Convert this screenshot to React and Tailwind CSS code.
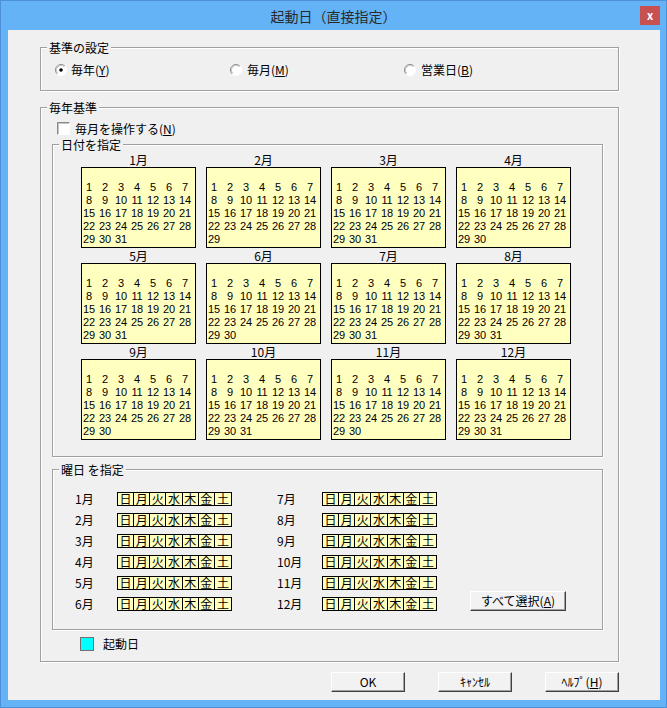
import React from "react";

const DAYS = [31, 29, 31, 30, 31, 30, 31, 31, 30, 31, 30, 31];
const WEEK = ["日", "月", "火", "水", "木", "金", "土"];

function Group({ label, className = "", children }) {
  return (
    <fieldset
      className={
        "border border-[#a0a0a0] shadow-[inset_1px_1px_0_#fff,1px_1px_0_#fff] " +
        className
      }
    >
      <legend className="ml-[6px] px-[2px] text-[12px] leading-[15px] bg-[#f0f0f0]">
        {label}
      </legend>
      {children}
    </fieldset>
  );
}

function Radio({ checked }) {
  return (
    <svg width="12" height="12" viewBox="0 0 12 12" className="shrink-0">
      <circle cx="6" cy="6" r="5.5" fill="#fff" />
      <path d="M2.11 9.89 A5.5 5.5 0 0 1 9.89 2.11" stroke="#8a8a8a" fill="none" />
      <path d="M2.82 9.18 A4.5 4.5 0 0 1 9.18 2.82" stroke="#c4c4c4" fill="none" />
      <path d="M9.89 2.11 A5.5 5.5 0 0 1 2.11 9.89" stroke="#ffffff" fill="none" />
      {checked && <circle cx="6" cy="6" r="1.8" fill="#000" />}
    </svg>
  );
}

function U({ children }) {
  return <span className="underline underline-offset-[1px]">{children}</span>;
}

function Btn({ children, className = "" }) {
  return (
    <div
      className={
        "flex items-center justify-center h-[20px] bg-[#f2f2f2] border border-t-white border-l-white border-r-[#404040] border-b-[#404040] shadow-[inset_-1px_-1px_0_#a0a0a0] text-[12px] leading-[12px] " +
        className
      }
    >
      {children}
    </div>
  );
}

function Calendar({ month, days }) {
  const nums = Array.from({ length: days }, (_, i) => i + 1);
  return (
    <div className="flex flex-col items-center">
      <div className="h-[15px] text-[12px] leading-[15px]">{month}月</div>
      <div className="w-[115px] h-[81px] border border-black bg-[#ffffc0] pl-[1px] pt-[13px]">
        <div className="grid grid-cols-[repeat(7,12px)] gap-x-[4px] font-['Liberation_Sans',sans-serif] text-[11px] leading-[13px] tracking-[-0.2px]">
          {nums.map((n) => (
            <div key={n} className="text-center whitespace-nowrap flex justify-center">
              {n}
            </div>
          ))}
        </div>
      </div>
    </div>
  );
}

function WeekBox() {
  return (
    <div className="w-[115px] h-[14px] border border-black bg-[#ffffc0] grid grid-cols-7 divide-x divide-black">
      {WEEK.map((w) => (
        <div key={w} className="flex items-center justify-center text-[12px] leading-[12px]">
          {w}
        </div>
      ))}
    </div>
  );
}

function WeekCol({ start, labelW }) {
  return (
    <div className="flex flex-col gap-y-[7px]">
      {Array.from({ length: 6 }, (_, i) => start + i).map((m) => (
        <div key={m} className="flex items-center h-[14px]">
          <div className={labelW + " text-[12px] leading-[14px]"}>{m}月</div>
          <WeekBox />
        </div>
      ))}
    </div>
  );
}

export default function App() {
  return (
    <div className="w-[667px] h-[708px] bg-[#64b3f7] shadow-[inset_0_0_0_1px_#4b90d8] flex flex-col font-['Noto_Sans_CJK_JP','Noto_Sans',sans-serif] text-black">
      {/* title bar */}
      <div className="h-[30px] grid grid-cols-[1fr_auto_1fr]">
        <div />
        <div className="self-center pt-[2px] text-[14px] leading-[16px] text-[#2a2a2a]">
          起動日（直接指定）
        </div>
        <div className="justify-self-end mr-[7px] mt-[6px] w-[20px] h-[19px] bg-[#c75050] flex items-center justify-center text-white text-[11px] leading-[11px] font-bold">
          x
        </div>
      </div>

      {/* client */}
      <div className="ml-[8px] w-[652px] h-[670px] bg-[#f0f0f0] flex flex-col">
        <Group label="基準の設定" className="mt-[10px] ml-[32px] w-[579px] h-[51px]">
          <div className="mt-[8px] pl-[14px] flex items-center h-[13px] text-[12px] leading-[13px]">
            <div className="w-[175px] flex items-center gap-[4px]">
              <Radio checked />
              <span>
                毎年(<U>Y</U>)
              </span>
            </div>
            <div className="w-[174px] flex items-center gap-[5px]">
              <Radio />
              <span>
                毎月(<U>M</U>)
              </span>
            </div>
            <div className="flex items-center gap-[5px]">
              <Radio />
              <span>
                営業日(<U>B</U>)
              </span>
            </div>
          </div>
        </Group>

        <Group label="毎年基準" className="mt-[9px] ml-[32px] w-[579px] pb-[10px]">
          <div className="mt-[7px] ml-[16px] flex items-center h-[13px] gap-[5px] text-[12px] leading-[13px]">
            <div className="w-[13px] h-[13px] bg-white border border-t-[#8a8a8a] border-l-[#8a8a8a] border-b-white border-r-white shadow-[inset_1px_1px_0_#c4c4c4]" />
            <span>
              毎月を操作する(<U>N</U>)
            </span>
          </div>

          <Group label="日付を指定" className="mt-[2px] ml-[11px] w-[551px] pb-[16px]">
            <div className="pl-[28px] grid grid-cols-[repeat(4,115px)] gap-x-[10px]">
              {DAYS.map((d, i) => (
                <Calendar key={i} month={i + 1} days={d} />
              ))}
            </div>
          </Group>

          <Group label="曜日 を指定" className="mt-[5px] ml-[11px] w-[551px] pt-[15px] pb-[18px]">
            <div className="pl-[22px] flex items-end">
              <WeekCol start={1} labelW="w-[42px]" />
              <div className="ml-[45px]">
                <WeekCol start={7} labelW="w-[45px]" />
              </div>
              <Btn className="ml-[33px] w-[96px]">
                すべて選択(<U>A</U>)
              </Btn>
            </div>
          </Group>

          <div className="mt-[7px] ml-[39px] flex items-center h-[14px] gap-[9px] text-[12px] leading-[14px]">
            <div className="w-[14px] h-[14px] bg-[#00ffff] border border-[#707070]" />
            <span>起動日</span>
          </div>
        </Group>

        <div className="mt-[10px] pr-[41px] flex justify-end gap-[33px]">
          <Btn className="w-[74px]">OK</Btn>
          <Btn className="w-[74px]">ｷｬﾝｾﾙ</Btn>
          <Btn className="w-[74px]">
            ﾍﾙﾌﾟ(<U>H</U>)
          </Btn>
        </div>
      </div>
    </div>
  );
}
